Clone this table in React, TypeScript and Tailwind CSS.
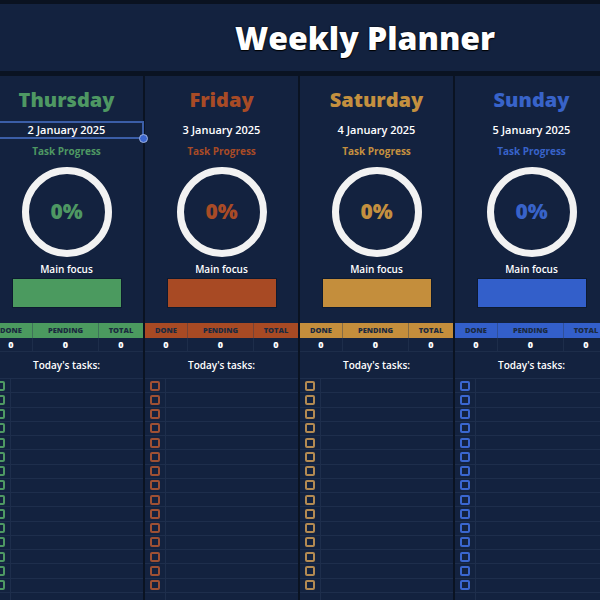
import React from "react";

type Day = {
  name: string;
  date: string;
  color: string;
  text: string;
  bg: string;
  border: string;
};

const days: Day[] = [
  { name: "Thursday", date: "2 January 2025", color: "#4e9863", text: "text-[#4e9863]", bg: "bg-[#4b9a5f]", border: "border-[#4e9863]" },
  { name: "Friday", date: "3 January 2025", color: "#a84b26", text: "text-[#a84b26]", bg: "bg-[#a84a24]", border: "border-[#9e5034]" },
  { name: "Saturday", date: "4 January 2025", color: "#c4903f", text: "text-[#c4903f]", bg: "bg-[#c48e3c]", border: "border-[#b38a52]" },
  { name: "Sunday", date: "5 January 2025", color: "#3560c8", text: "text-[#3863c9]", bg: "bg-[#335fca]", border: "border-[#3a66cf]" },
];

function Column({ d, idx }: { d: Day; idx: number }) {
  const rows = Array.from({ length: 16 });
  return (
    <div className="w-[153px] shrink-0 flex flex-col bg-[#13223f]">
      <div className="pt-[12px] h-[36px] flex items-start justify-center">
        <div className={`h-[24px] leading-[24px] text-[20px] font-extrabold ${d.text}`}>{d.name}</div>
      </div>
      <div className="mt-[9px] h-[18px] relative flex items-center justify-center">
        {idx === 0 && (
          <>
            <div className="absolute left-[-4px] right-[-1px] top-0 bottom-0 border-2 border-[#3b5ea8]" />
            <div className="absolute right-[-5px] bottom-[-4px] w-[9px] h-[9px] rounded-full bg-[#3c67d0] border border-[#9fb3e0]" />
          </>
        )}
        <span className="relative text-[11px] font-semibold text-white">{d.date}</span>
      </div>
      <div className={`h-[24px] flex items-center justify-center text-[10px] font-bold ${d.text}`}>Task Progress</div>
      <div className="mt-[4px] h-[90px] flex justify-center">
        <div className="w-[90px] h-[90px] rounded-full border-[7px] border-[#f2f2f2] flex items-center justify-center">
          <span className={`text-[21px] font-extrabold ${d.text}`}>0%</span>
        </div>
      </div>
      <div className="mt-[3px] h-[18px] flex items-center justify-center text-[10px] font-semibold text-white">Main focus</div>
      <div className="h-[30px] flex pl-[22px]">
        <div className={`w-[110px] h-[30px] ${d.bg} border border-[#0d1a30]`} />
      </div>
      <div className="mt-[15px]">
        <div className={`h-[15px] flex ${d.bg} text-[7.5px] font-extrabold text-[#1b2a40]`}>
          <div className="w-[43px] flex items-center justify-center border-r border-[#2a3a50]/40">DONE</div>
          <div className="w-[66px] flex items-center justify-center border-r border-[#2a3a50]/40">PENDING</div>
          <div className="flex-1 flex items-center justify-center">TOTAL</div>
        </div>
        <div className="h-[14px] flex text-[9px] font-extrabold text-white border-b border-[#1d2d4a]">
          <div className="w-[43px] flex items-center justify-center border-r border-[#1d2d4a]">0</div>
          <div className="w-[66px] flex items-center justify-center border-r border-[#1d2d4a]">0</div>
          <div className="flex-1 flex items-center justify-center">0</div>
        </div>
      </div>
      <div className="h-[26px] flex items-center justify-center text-[10px] font-semibold text-white">Today&apos;s tasks:</div>
      <div className="flex flex-col">
        {rows.map((_, i) => (
          <div key={i} className="h-[14.25px] shrink-0 flex border-t border-[#1e2e4c]">
            <div className="w-[21px] flex items-center justify-center border-r border-[#1e2e4c]">
              {i < 15 && <div className={`w-[10px] h-[10px] rounded-[2px] border-2 ${d.border}`} />}
            </div>
            <div className="flex-1" />
          </div>
        ))}
      </div>
    </div>
  );
}

export default function App() {
  return (
    <div
      className="w-[600px] h-[600px] overflow-hidden bg-[#0b1527]"
      style={{ fontFamily: '"Open Sans", "Noto Sans", sans-serif' }}
    >
      <div className="h-[4px] bg-[#0a1220]" />
      <div className="h-[67px] bg-[#13223f] flex items-center justify-center pl-[130px]">
        <h1 className="text-[32px] font-extrabold text-white [text-shadow:0_0_2px_#000,0_1px_1px_#000]">
          Weekly Planner
        </h1>
      </div>
      <div className="h-[5px] bg-[#0a1322]" />
      <div className="flex ml-[-10px] gap-[2px] bg-[#0a1322]">
        {days.map((d, i) => (
          <Column key={d.name} d={d} idx={i} />
        ))}
      </div>
    </div>
  );
}
